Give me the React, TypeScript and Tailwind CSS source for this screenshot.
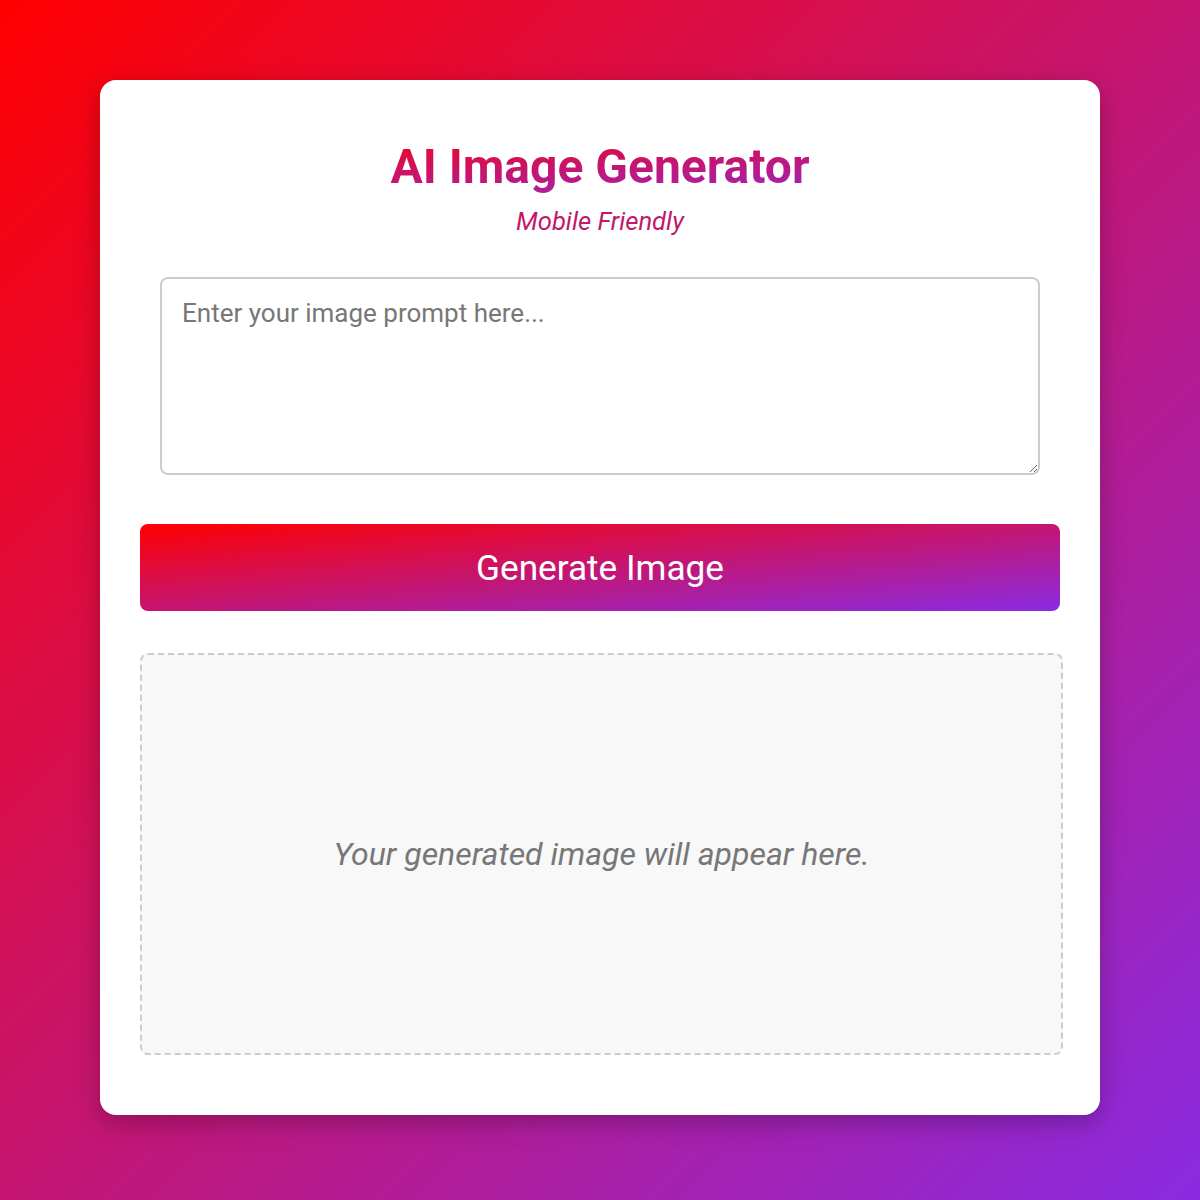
export default function App() {
  return (
    <div className="min-h-[1200px] w-full bg-[linear-gradient(to_bottom_right,#ff0000,#8a2be2)] flex justify-center pt-20 font-['Roboto',sans-serif]">
      <div className="w-[1000px] h-[1035px] bg-white rounded-2xl shadow-[0_8px_24px_rgba(0,0,0,0.25)] px-10 pt-[58px] flex flex-col items-center">
        <h1 className="w-full text-center text-[48px] leading-[1.2] font-bold bg-[linear-gradient(to_bottom_right,#ff0000,#8a2be2)] bg-clip-text text-transparent">
          AI Image Generator
        </h1>
        <p className="mt-[6px] text-[25.6px] leading-[1.5] italic text-[#c0186a]">Mobile Friendly</p>
        <textarea
          placeholder="Enter your image prompt here..."
          className="mt-[37px] w-[880px] h-[198px] border-2 border-[#cccccc] rounded-lg px-5 pt-[15px] pb-[13px] text-[26px] leading-[1.5] text-[#333] placeholder:text-[#777] outline-none resize-y"
        />
        <button className="mt-[49px] w-full h-[87px] pt-[2px] rounded-lg bg-[linear-gradient(to_bottom_right,#ff0000,#8a2be2)] text-white text-[35.2px]">
          Generate Image
        </button>
        <div className="mt-[42px] self-start w-[923px] h-[402px] border-2 border-dashed border-[#cccccc] rounded-lg bg-[#f8f8f8] flex items-center justify-center">
          <p className="text-[32px] italic text-[#777]">Your generated image will appear here.</p>
        </div>
      </div>
    </div>
  );
}
